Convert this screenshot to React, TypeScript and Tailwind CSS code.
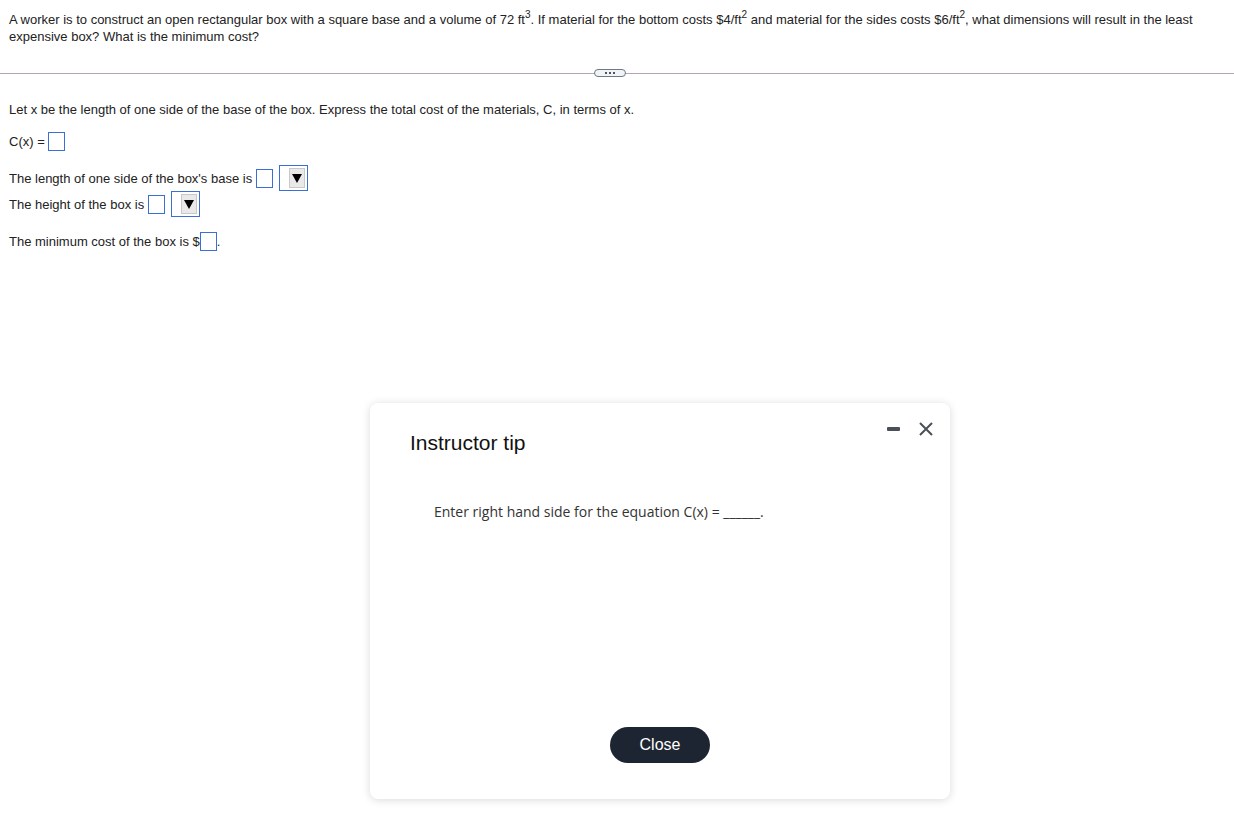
export default function App() {
  const box = "inline-block w-[17px] h-[19px] border border-[#3a6fd6] bg-white align-middle";
  const sup = "inline-block align-[6px] text-[10px] leading-none";
  const drop = (
    <span className="inline-flex items-center justify-end w-[29px] h-[26px] border border-[#3a6fd6] bg-white pr-[2px]">
      <span className="flex items-center justify-center w-[16px] h-[20px] bg-[#e9e9e9] border border-[#c8c8c8]">
        <svg width="10" height="10" viewBox="0 0 10 10"><path d="M0 1 L10 1 L5 10 Z" fill="#000" /></svg>
      </span>
    </span>
  );
  return (
    <div className="relative w-[1234px] h-[833px] bg-white text-[#222] font-['Liberation_Sans',Arial,sans-serif] overflow-hidden">
      <div className="px-[9px] pt-[10px] pr-[30px] text-[13px] leading-[17px]">
        A worker is to construct an open rectangular box with a square base and a volume of 72 ft<span className={sup}>3</span>. If material for the bottom costs $4/ft<span className={sup}>2</span> and material for the sides costs $6/ft<span className={sup}>2</span>, what dimensions will result in the least expensive box? What is the minimum cost?
      </div>
      <div className="relative mt-[23px] h-[10px] flex items-center">
        <div className="w-full h-px bg-[#b9a3b4]" />
        <div className="absolute left-[594px] top-[1px] w-[32px] h-[8px] rounded-full border border-[#6b7a8a] bg-[#f1f3f5] flex items-center justify-center gap-[2px]">
          <span className="w-[2px] h-[2px] bg-[#4a5563]" />
          <span className="w-[2px] h-[2px] bg-[#4a5563]" />
          <span className="w-[2px] h-[2px] bg-[#4a5563]" />
        </div>
      </div>
      <div className="px-[9px] text-[13px] leading-[17px]">
        <p className="mt-[23px]">Let x be the length of one side of the base of the box. Express the total cost of the materials, C, in terms of x.</p>
        <p className="mt-[14px] flex items-center gap-[3px]">C(x) = <span className={box} /></p>
        <p className="mt-[14px] flex items-center gap-[4px]">The length of one side of the box's base is <span className={box} /> <span className="ml-[2px] flex">{drop}</span></p>
        <p className="mt-[0px] flex items-center gap-[4px]">The height of the box is <span className={box} /> <span className="ml-[2px] flex">{drop}</span></p>
        <p className="mt-[15px] flex items-center">The minimum cost of the box is $<span className={box} />.</p>
      </div>

      <div className="absolute left-[370px] top-[403px] w-[580px] h-[396px] bg-white rounded-[8px] shadow-[0_1px_8px_rgba(0,0,0,0.15)] flex flex-col">
        <div className="flex justify-between items-start pl-[40px] pr-[16px] pt-[17px]">
          <h2 className="mt-[7px] text-[21px] text-[#111] font-['Liberation_Sans',Arial,sans-serif]">Instructor tip</h2>
          <div className="flex items-center gap-[18px] mt-[1px]">
            <span className="w-[13px] h-[4px] rounded-[1px] bg-[#4b4f57]" />
            <svg width="16" height="16" viewBox="0 0 16 16" stroke="#4b4f57" strokeWidth="2"><path d="M2 2 L14 14 M14 2 L2 14" /></svg>
          </div>
        </div>
        <p className="mt-[42px] pl-[64px] text-[14px] text-[#333] font-['Open_Sans',sans-serif]">Enter right hand side for the equation C(x) = ______.</p>
        <div className="mt-auto mb-[36px] flex justify-center">
          <button className="w-[100px] h-[36px] rounded-full bg-[#1e2532] text-white text-[16px] font-['Liberation_Sans',Arial,sans-serif]">Close</button>
        </div>
      </div>
    </div>
  );
}
